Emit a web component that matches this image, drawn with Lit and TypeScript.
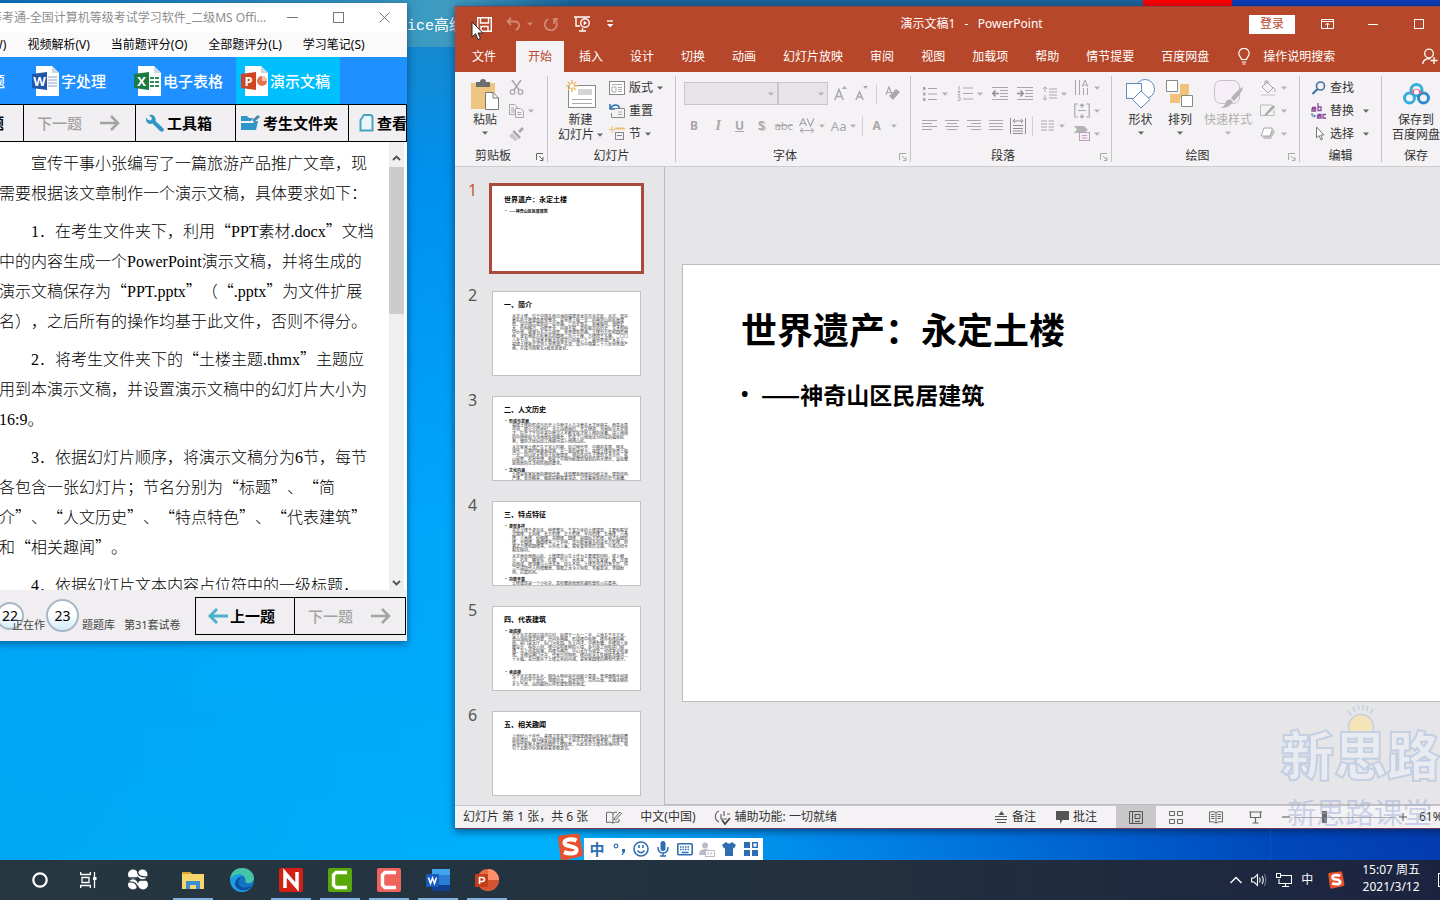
import { LitElement, html, svg, css } from "lit";
import { customElement } from "lit/decorators.js";
import { classMap } from "lit/directives/class-map.js";

const ico = (w: number, h: number, body: unknown) =>
  html`<svg class="ico" width=${w} height=${h} viewBox="0 0 ${w} ${h}" fill="none" aria-hidden="true">${body}</svg>`;

const caret = (color = "#666") => ico(6, 4, svg`<path d="M0 0.5H6L3 3.7Z" fill=${color}/>`);
const lightCaret = () => caret("#b4b2b4");

const G = "#a9a7aa";

const sogou = (s: number) => html`<svg class="ico" width=${s} height=${s} viewBox="0 0 28 28" fill="none" aria-hidden="true">
  <path d="M2 5Q2 3 4 2.600L21 0.600Q23 0.400 23.600 2.400L27 20Q27.300 23 25 23.600L8 27.400Q5 27.800 4.500 25Z" fill="#e8512d"/>
  <path d="M20.500 7.500C16 5.500 8.500 6 8.500 10C8.500 14.500 20.500 12 20.500 17C20.500 21.500 12 21 8 19" stroke="#fff" stroke-width="4.200"/></svg>`;

const docIcon = (letter: string, color: string, lines: unknown) => html`<span class="doc">
  ${ico(28, 32, svg`<path d="M4 1H20L27 8V31H4Z" fill="#fff"/><path d="M20 1V8H27Z" fill="#cfd6e0"/>${lines}<path d="M0 9L15 7V25L0 23Z" fill=${color}/>`)}
  <b class="doc-letter">${letter}</b></span>`;

const arrowRight = ico(20, 16, svg`<path d="M0 8H18M11 1L18 8L11 15" stroke="#a3a3a3" stroke-width="2.500"/>`);
const arrowLeft = ico(20, 16, svg`<path d="M20 8H2M9 1L2 8L9 15" stroke="#49b3cf" stroke-width="3"/>`);

/** Sets Latin runs in the serif face, leaving Chinese text and its full-width marks alone. */
const mixed = (line: string) =>
  line.split(/([A-Za-z0-9.:]+)/).map((part, i) => (i % 2 ? html`<span class="latin">${part}</span>` : part));

const PARAGRAPHS: string[][] = [
  ["宣传干事小张编写了一篇旅游产品推广文章，现", "需要根据该文章制作一个演示文稿，具体要求如下："],
  ["1．在考生文件夹下，利用“PPT素材.docx”文档", "中的内容生成一个PowerPoint演示文稿，并将生成的", "演示文稿保存为“PPT.pptx”（“.pptx”为文件扩展", "名），之后所有的操作均基于此文件，否则不得分。"],
  ["2．将考生文件夹下的“土楼主题.thmx”主题应", "用到本演示文稿，并设置演示文稿中的幻灯片大小为", "16:9。"],
  ["3．依据幻灯片顺序，将演示文稿分为6节，每节", "各包含一张幻灯片；节名分别为“标题”、“简", "介”、“人文历史”、“特点特色”、“代表建筑”", "和“相关趣闻”。"],
  ["4．依据幻灯片文本内容占位符中的一级标题，"],
];

@customElement("exam-window")
export class ExamWindow extends LitElement {
  static styles = css`
    :host { display: flex; flex-direction: column; background: #fff; overflow: hidden; color: #000;
      font: 12px/16px "Noto Sans", "Noto Sans CJK SC", sans-serif; box-shadow: 0 2px 8px rgba(0, 30, 70, 0.55); }
    button { font: inherit; color: inherit; background: none; border: 0; padding: 0; margin: 0; display: flex; align-items: center; }
    .ico { display: block; flex: none; }
    .title { display: flex; align-items: center; height: 29px; padding-left: 30px; color: #8d8d8d; white-space: nowrap; }
    .title h1 { font: inherit; margin: 0; flex: 1; }
    .title button { width: 46px; justify-content: center; }
    .menu { display: flex; align-items: center; gap: 21px; height: 25px; padding-left: 4px; background: #fbfafb; white-space: nowrap; }
    .tabs { display: grid; grid-template-columns: 67px 102px 107px 104px 1fr; height: 47px; background: #1e90ff; color: #fff; }
    .tabs button { font-size: 15px; font-weight: 500; line-height: 20px; gap: 1px; padding-left: 5px; white-space: nowrap; }
    .tabs .first { justify-content: flex-end; padding-right: 22px; }
    .tabs .on { background: #00bfff; }
    .doc { display: grid; }
    .doc > * { grid-area: 1 / 1; }
    .doc-letter { color: #fff; font: bold 13px/32px "Open Sans", sans-serif; width: 15px; text-align: center; }
    .tools { display: grid; grid-template-columns: 64px 112px 100px 113px 1fr; height: 38px; box-sizing: border-box;
      border-top: 1px solid #000; border-bottom: 1px solid #000; background: #f1eff1; }
    .tools button { border-right: 1px solid #000; font-size: 15px; font-weight: 600; line-height: 20px; gap: 3px; padding-left: 5px; white-space: nowrap; overflow: hidden; }
    .tools .first { justify-content: flex-end; padding-right: 19px; }
    .tools .off { color: #a3a3a3; font-weight: 500; padding: 0 15px 0 13px; justify-content: space-between; }
    .tools .wide { padding-left: 10px; }
    .body { flex: 1; min-height: 0; display: flex; }
    .text { flex: 1; min-width: 0; overflow: hidden; padding: 5px 0 0 39px; font: 300 16px/30px "Noto Sans CJK SC", sans-serif; text-spacing-trim: space-all; }
    .text p { margin: 0 0 8px; text-indent: 32px; white-space: nowrap; }
    .line { display: block; height: 30px; }
    .line + .line { text-indent: 0; }
    .latin { font-family: "Liberation Serif", serif; font-weight: 400; line-height: 16px; }
    .scroll { width: 15px; margin-right: 3px; background: #f0eef0; display: flex; flex-direction: column; align-items: center; padding: 13px 0 4px; box-sizing: border-box; }
    .thumb { width: 15px; flex: 0 0 34%; background: #cdcbcd; margin: 6px 0 auto; }
    .foot { position: relative; display: flex; align-items: center; height: 51px; background: #f0eef0; padding-left: 36px; gap: 22px; }
    .circle { justify-content: center; border: 2px solid #a9b7c6; border-radius: 50%; box-sizing: border-box; width: 28px; height: 28px; font-size: 14px;
      background: linear-gradient(#fff 45%, #d3ecf8); }
    .circle.big { width: 33px; height: 33px; }
    .doing { position: absolute; left: 52px; bottom: 8px; font-size: 11px; color: #444; white-space: nowrap; display: flex; gap: 9px; }
    .doing .cut { width: 61px; }
    .nav { display: flex; margin-left: auto; margin-right: 1px; border: 1px solid #000; height: 36px; }
    .nav button { font-size: 15px; font-weight: 700; line-height: 20px; padding: 0 19px 0 12px; gap: 2px; }
    .nav .off { color: #a3a3a3; font-weight: 500; border-left: 1px solid #000; padding: 0 14px 0 13px; gap: 18px; }
  `;

  render() {
    return html`
      <header class="title">
        <h1>等考通-全国计算机等级考试学习软件_二级MS Offi...</h1>
        <button aria-label="最小化">${ico(11, 11, svg`<path d="M0 5.5H11" stroke="#777"/>`)}</button>
        <button aria-label="最大化">${ico(11, 11, svg`<rect x=".5" y=".5" width="10" height="10" stroke="#777"/>`)}</button>
        <button aria-label="关闭">${ico(11, 11, svg`<path d="M.5 .5L10.500 10.500M10.500 .5L.5 10.500" stroke="#777"/>`)}</button>
      </header>
      <nav class="menu">
        <button>窗口(W)</button><button>视频解析(V)</button><button>当前题评分(O)</button><button>全部题评分(L)</button><button>学习笔记(S)</button>
      </nav>
      <nav class="tabs">
        <button class="first">选择题</button>
        <button>${docIcon("W", "#1e56a8", svg`<path d="M16 12H25M16 15H25M16 18H25M16 21H25" stroke="#8d9fc0"/>`)}字处理</button>
        <button>${docIcon("X", "#1b7a43", svg`<path d="M16 13H20M21 13H25M16 17H20M21 17H25M16 21H20M21 21H25" stroke="#2f8a55" stroke-width="2"/>`)}电子表格</button>
        <button class="on">${docIcon("P", "#d04423", svg`<circle cx="21" cy="16" r="5" fill="#e9704f"/><path d="M21 16V11A5 5 0 0 1 26 16Z" fill="#f7c3b3"/>`)}演示文稿</button>
      </nav>
      <div class="tools">
        <button class="first">上一题</button>
        <button class="off" disabled>下一题 ${arrowRight}</button>
        <button class="wide">${ico(18, 18, svg`<path d="M3 1L6 4L5 6.500L2 6L0 3.500C-1 8 3 11 6.500 9.500L14 17Q16 18.500 17.400 17Q18.500 15.500 17 14L9.500 7C10.500 3 7 -0.500 3 1Z" fill="#2f97c8"/>`)}工具箱</button>
        <button>${ico(19, 16, svg`<path d="M0 1H6L8 3H12L10 6H0Z" fill="#2f97c8"/><path d="M0 8H12L14 6H17L15 15H0Z" fill="#2f97c8"/><path d="M11 5L17 0L19 2L13 7Z" fill="#4a86a8"/>`)}考生文件夹</button>
        <button class="wide">${ico(15, 18, svg`<path d="M5 1H11Q13.500 1 13.500 3.500V16.500H1.500V6Z" stroke="#49a4c4" stroke-width="2" fill="#eaf6fa"/>`)}查看</button>
      </div>
      <div class="body">
        <article class="text">
          ${PARAGRAPHS.map((p) => html`<p>${p.map((l) => html`<span class="line">${mixed(l)}</span>`)}</p>`)}
        </article>
        <div class="scroll">
          ${ico(9, 6, svg`<path d="M1 5L4.500 1.500L8 5" stroke="#505050" stroke-width="1.800"/>`)}
          <div class="thumb"></div>
          ${ico(9, 6, svg`<path d="M1 1L4.500 4.500L8 1" stroke="#505050" stroke-width="1.800"/>`)}
        </div>
      </div>
      <footer class="foot">
        <button class="circle">22</button>
        <button class="circle big">23</button>
        <span class="doing"><span class="cut">正在作</span><span>题题库</span><span>第31套试卷</span></span>
        <div class="nav">
          <button>${arrowLeft}上一题</button>
          <button class="off" disabled>下一题${arrowRight}</button>
        </div>
      </footer>`;
  }
}

type Block = { head?: string; text?: string[] };
const SLIDES: { title: string; blocks: Block[] }[] = [
  { title: "世界遗产：永定土楼", blocks: [{ head: "——神奇山区民居建筑" }] },
  {
    title: "一、简介",
    blocks: [{ text: ["永定土楼，位于中国东南沿海的福建省龙岩市永定区，永定，现存著名的土楼建筑类型繁多，是世界上独一无二的神奇山区民居建筑，是中国古建筑的一朵奇葩。它历史悠久、风格独特，规模宏大、结构精巧，功能齐全、内涵丰富，具有极高的历史、艺术和科学价值，被誉为东方古城堡、世界建筑奇葩。土楼分方形和圆形两种，龙岩地区共有著名的圆楼三百六十座，方楼四千多座。二〇〇八年七月，在加拿大魁北克城举行的第三十二届世界遗产大会上，福建土楼被正式列入世界遗产名录，成为中国第三十六处世界遗产地，并成为国家五A级旅游景区。"] }],
  },
  {
    title: "二、人文历史",
    blocks: [
      { head: "形成与发展", text: [
        "福建土楼的形成与历史上中原汉人几次著名大迁徙相关。西晋永嘉年间，即公元四世纪，北方战祸频仍，天灾肆虐，当地民众大举南迁，拉开了千百年来中原汉人不断举族迁徙入闽的序幕。进入闽南的中原移民与当地居民相融合，形成了以闽南话为特征的福佬民系；辗转迁徙后经江西赣州进入闽西山区。",
        "永定客家土楼产生于宋元时期，经过明代早、中期的发展，明末、清代、民国时期逐渐成熟，并一直延续至今。福建土楼是世界上独一无二的山区大型夯土民居建筑，创造性的生土建筑艺术杰作，依山就势，布局合理，吸收了中国传统建筑规划的风水理念，适应聚族而居的生活和防御的要求。" ] },
      { head: "文化内涵", text: ["土楼是客家民居的典型代表，体现聚族而居的传统文化，建筑结构严谨，装饰精美，楹联匾额寓意深远，记录着家族的历史与荣耀，代代相传，生生不息，绵延千年。"] },
    ],
  },
  {
    title: "三、特点特征",
    blocks: [
      { head: "类型多样", text: [
        "永定土楼千姿百态，种类繁多，千变万化的土楼建筑，主要有殿堂式围楼、五凤楼、长方形楼、正方形楼、半月形楼、五角楼、六角楼、八角楼、纱帽楼、吊脚楼、圆楼、前圆后方形楼、前方后圆形楼、半圆楼、椭圆楼等三十多种，其中数量最多的是长方形楼、府第式方楼和圆楼等，从外形上看，富有变化和层次感，与青山绿水相互映衬。",
        "永定地处闽西山区，土楼建筑以生土作为主要建筑材料，掺上细沙、石灰、糯米饭、红糖、竹片、木条等，经过反复揉、舂、压建造而成。楼顶覆以火烧瓦盖，经久不损。土楼高可达四至五层，供三代或四代人同楼聚居，规模之大令人惊叹，冬暖夏凉，坚固耐用，抗震防风。" ] },
      { head: "功能丰富", text: ["土楼建筑是一个小社会，具有聚族而居防盗防兽防火抗震等。"] },
    ],
  },
  {
    title: "四、代表建筑",
    blocks: [
      { head: "振成楼", text: [
        "位于永定县湖坑镇洪坑村，始建于一九一二年，占地五千平方米，悬山顶抬梁式构架，分内外两圈，形成楼中有楼，楼外有楼的格局。前门是大厅，后门为花园。外土内洋，中西合璧，外楼按八卦图设计，每卦六间，楼中设有砖砌防火墙，卦与卦之间有拱门相通，关上自成院落。内楼为两层，中心大厅为祖堂，可供宴会和演戏。全楼设两口水井，代表日月阴阳。楼内有永久性楹联及题词二十余幅，充分展示了土楼文化的内涵，是客家圆楼的典型代表作。", "　" ] },
      { head: "承启楼", text: ["位于永定县高头乡，相传从明崇祯年间破土奠基，至清康熙年间竣工，历时半个世纪，规模巨大，造型奇特，古色古香，充满浓郁的乡土气息，由四圈同心环形建筑组合而成。"] },
    ],
  },
  {
    title: "五、相关趣闻",
    blocks: [{ text: ["上世纪八十年代，美国卫星发现中国福建西部山区有大片神秘的蘑菇状建筑，疑为核反应堆装置，于是派人前来实地考察，结果发现是世代客家人居住的圆形土楼民居，从此永定土楼名扬海内外，吸引了无数中外游客前来参观游览。"] }],
  },
];

const alignLines = (a: number[][]) => ico(16, 13, svg`${a.map(([x, w], i) => svg`<path d="M${x} ${0.5 + i * 3}h${w}" stroke=${G}/>`)}`);

@customElement("slides-window")
export class SlidesWindow extends LitElement {
  static styles = css`
    :host { display: flex; flex-direction: column; background: #e6e6e8; overflow: hidden; color: #333; box-sizing: border-box;
      border-top: 1px solid #8a4a48; border-bottom: 1px solid #6e3b52;
      font: 12px/16px "Noto Sans", "Noto Sans CJK SC", sans-serif; box-shadow: 0 2px 8px rgba(0, 20, 60, 0.6); }
    button { font: inherit; color: inherit; background: none; border: 0; padding: 0; margin: 0; display: flex; align-items: center; white-space: nowrap; }
    .ico { display: block; flex: none; }
    .bar { display: grid; grid-template-columns: 1fr auto 1fr; align-items: center; height: 34px; background: #b7472a; color: #fff; flex: none; }
    .bar h1 { font: inherit; margin: 0; white-space: pre; }
    .quick { display: flex; align-items: center; gap: 14px; padding-left: 22px; }
    .quick .dim { opacity: 0.35; }
    .quick button { gap: 6px; }
    .quick .start { margin: 0 2px 0 -6px; }
    .quick .undo { margin-right: -3px; }
    .win { display: flex; justify-content: flex-end; align-items: center; }
    .win button { width: 46px; justify-content: center; }
    .win .login { background: #fff; color: #b7472a; height: 19px; margin-right: 9px; }
    .ribbon-tabs { display: flex; height: 31px; background: #b7472a; color: #fff; padding-left: 5px; gap: 3px; flex: none; }
    .ribbon-tabs button { padding: 0 12px; }
    .ribbon-tabs .file { margin-right: 5px; }
    .ribbon-tabs .on { background: #f4f2f4; color: #b7472a; }
    .ribbon-tabs .tell { padding: 0 0 0 14px; gap: 13px; }
    .ribbon-tabs .share { margin-left: auto; padding: 0 50px 0 0; }
    .ribbon { display: grid; grid-template-columns: 93px 128px 235px 201px 188px 82px 1fr; height: 95px; box-sizing: border-box; padding: 4px 0;
      background: #f4f2f4; border-bottom: 1px solid #cfcdcf; flex: none; }
    .group { display: flex; flex-direction: column; border-right: 1px solid #c6c4c6; min-width: 0; position: relative; }
    .group:last-child { border: 0; }
    .group .in { flex: 1; display: flex; min-height: 0; }
    .group h2 { font: inherit; margin: 0; height: 14px; text-align: center; padding-right: 16px; }
    .group .mid { padding-right: 0; }
    .launch { position: absolute; right: 3px; bottom: 1px; }
    .big { flex-direction: column; padding-top: 3px; gap: 3px; }
    .big.off { color: #b0aeb0; }
    .big .art { height: 30px; display: grid; place-items: center; }
    .two { display: flex; align-items: center; gap: 3px; }
    .tight { line-height: 15px; }
    .side { display: grid; grid-template-rows: repeat(3, 23px); align-content: start; }
    .side button { gap: 4px; }
    .clip { padding-left: 15px; gap: 9px; }
    .new { padding-left: 10px; gap: 6px; }
    .rows { flex-direction: column; padding-left: 8px; }
    .row { display: flex; align-items: center; height: 30px; gap: 8px; }
    .row.first { height: 35px; }
    .row button { gap: 4px; color: #a9a7aa; }
    .row .vr { width: 1px; height: 20px; background: #d2d0d2; }
    .combo { display: grid; align-items: center; justify-items: end; }
    .combo > * { grid-area: 1 / 1; }
    .combo select { appearance: none; box-sizing: border-box; height: 23px; width: 94px; border: 1px solid #c8c6c8; background: #e6e4e6; border-radius: 0; margin: 0; opacity: 1; }
    .combo .small { width: 50px; }
    .combo .ico { margin-right: 4px; pointer-events: none; z-index: 1; }
    .combos { display: flex; margin-right: -2px; }
    .fmt { font: bold 12px/16px "Noto Sans", sans-serif; }
    .row.text { padding-left: 6px; gap: 14px; }
    .row.text .grp { display: flex; align-items: center; gap: 6px; margin-left: -4px; }
    .it { font-style: italic; font-family: "Liberation Serif", serif; font-size: 14px; }
    .un { text-decoration: underline; }
    .sh { text-shadow: 2px 1px 1px #ccc; }
    .st { text-decoration: line-through; font-weight: 400; font-size: 11px; }
    .aa { font-weight: 400; font-size: 13px; }
    .para { padding-left: 11px; justify-content: space-between; }
    .para .row { gap: 9px; }
    .para .row + .row { gap: 6px; }
    .para .side { padding-right: 11px; }
    .draw { padding-left: 13px; gap: 10px; }
    .draw .side { margin-left: -2px; }
    .draw .side button { gap: 5px; }
    .edit { padding-left: 11px; }
    .edit .side button { gap: 3px; }
    .edit .ico + span + .ico { margin-left: 6px; }
    .save { padding-left: 10px; }
    .save + h2 { text-align: left; padding-left: 22px; }
    .main { flex: 1; min-height: 0; display: grid; grid-template-columns: 210px 1fr; }
    .list { margin: 0; padding: 19px 0 0 13px; list-style: none; display: flex; flex-direction: column; gap: 20px; overflow: hidden; border-right: 1px solid #bdbbbd; }
    .item { display: grid; grid-template-columns: 24px 149px; height: 85px; color: #555; font-size: 16px; line-height: 8px; flex: none; }
    .card { background: #fff; border: 1px solid #c2c0c2; overflow: hidden; color: #333; font: 4px/4px "Noto Sans CJK SC", sans-serif; padding: 7px 11px 0; }
    .card h3 { font: bold 7px/11px "Noto Sans CJK SC", sans-serif; margin: 0 0 4px; color: #000; }
    .card ul { margin: 0 0 3px; padding: 0 0 0 8px; list-style: none; }
    .card li { overflow-wrap: anywhere; margin-bottom: 2px; }
    .card .head { font-weight: bold; color: #111; margin: 0; }
    .item.on { color: #c9563b; }
    .item.on .card { border-color: #fff; outline: 3px solid #a84b3c; }
    .stage { display: flex; align-items: center; justify-content: center; padding: 0 24px 5px 12px; border-bottom: 1px solid #bdbbbd; min-width: 0; }
    .slide { width: 100%; max-width: 777px; aspect-ratio: 16 / 9; box-sizing: border-box; background: #fff; border: 1px solid #bdbbbd; color: #000;
      font-family: "Noto Sans CJK SC", sans-serif; font-weight: bold; padding: 38px 58px; }
    .slide h2 { font-size: 36px; line-height: 50px; margin: 0 0 24px; text-spacing-trim: space-all; }
    .slide p { margin: 0; font-size: 23px; line-height: 34px; display: flex; }
    .dot { font-family: "Open Sans", sans-serif; font-size: 20px; width: 20px; }
    .status { display: flex; align-items: center; height: 23px; background: #f4f2f4; border-top: 1px solid #c6c4c6; padding-left: 8px; flex: none; white-space: nowrap; box-sizing: border-box; }
    .status .l { display: flex; gap: 18px; flex: 1; align-items: center; }
    .status button { gap: 4px; }
    .status .talk { margin: 0 19px 0 20px; }
    .status .v { width: 40px; height: 22px; justify-content: center; }
    .status .v.on { background: #c9c7c9; }
    .zoom { display: flex; align-items: center; gap: 4px; padding-left: 6px; }
    .zoom input { appearance: none; width: 101px; height: 12px; margin: 0; background: linear-gradient(#aaa, #aaa) center / 100% 1px no-repeat; }
    .zoom input::-webkit-slider-thumb { appearance: none; width: 5px; height: 12px; background: #666; border: 0; border-radius: 0; }
    .zoom .pct { padding-left: 8px; width: 77px; box-sizing: border-box; }
  `;

  private launcher(dark = false) {
    return html`<button class="launch" aria-label="更多选项">${ico(8, 8, svg`<path d="M.5 7V.5H7M3 3L7 7M7 4V7.500H4" stroke=${dark ? "#666" : "#aaa"}/>`)}</button>`;
  }

  private slides() {
    return html`<ol class="list">${SLIDES.map((s, i) => html`<li class=${classMap({ item: true, on: i === 0 })}>
      <span>${i + 1}</span>
      <div class="card"><h3>${s.title}</h3>
        ${s.blocks.map((b) => html`${b.head ? html`<p class="head">• ${b.head}</p>` : ""}<ul>${(b.text ?? []).map((t) => html`<li>${t}</li>`)}</ul>`)}
      </div></li>`)}</ol>`;
  }

  render() {
    const tabs = ["插入", "设计", "切换", "动画", "幻灯片放映", "审阅", "视图", "加载项", "帮助", "情节提要", "百度网盘"];
    return html`
      <header class="bar">
        <div class="quick">
          <button aria-label="保存">${ico(15, 15, svg`<path d="M.7 .7H14.300V14.300H2.500L.7 12.500Z" stroke="#fff" stroke-width="1.400"/><path d="M3.500 1V6H11.500V1M4 14V9.500H11V14" stroke="#fff" stroke-width="1.400"/>`)}</button>
          <button class="dim undo" aria-label="撤消">${ico(15, 14, svg`<path d="M5 1L1.500 4.500L5 8M2 4.500H9Q13.500 5 13 9Q12.500 12 9.500 13" stroke="#fff" stroke-width="1.800"/>`)}${caret("#fff")}</button>
          <button class="dim" aria-label="恢复">${ico(22, 14, svg`<path d="M4 2A6 6 0 1 0 10.500 2.500M10 7V2H14" stroke="#fff" stroke-width="1.800"/>`)}</button>
          <button class="start" aria-label="从头开始">${ico(17, 16, svg`<path d="M0 1H16M2 1V10H6M5 15H12M8.500 12V15" stroke="#fff" stroke-width="1.400"/><circle cx="11" cy="7" r="4.300" stroke="#fff" stroke-width="1.400"/><path d="M9.700 4.800L13 7L9.700 9.200Z" fill="#fff"/>`)}</button>
          <button aria-label="自定义">${ico(7, 8, svg`<path d="M0 1H6" stroke="#fff" stroke-width="1.300"/><path d="M0 4H6.500L3.200 7.300Z" fill="#fff"/>`)}</button>
        </div>
        <h1>演示文稿1   -   PowerPoint</h1>
        <div class="win">
          <button class="login">登录</button>
          <button aria-label="功能区显示选项">${ico(13, 10, svg`<path d="M.5 .5H12.500V9.500H.5ZM.5 2.500H12.500M6.500 9V4.500M4.500 6L6.500 4L8.500 6" stroke="#fff"/>`)}</button>
          <button aria-label="最小化">${ico(10, 10, svg`<path d="M0 5.500H10" stroke="#fff"/>`)}</button>
          <button aria-label="最大化">${ico(10, 10, svg`<rect x=".5" y=".5" width="9" height="9" stroke="#fff"/>`)}</button>
          <button aria-label="关闭">${ico(10, 10, svg`<path d="M0 0L10 10M10 0L0 10" stroke="#fff"/>`)}</button>
        </div>
      </header>
      <nav class="ribbon-tabs">
        <button class="file">文件</button><button class="on">开始</button>
        ${tabs.map((t) => html`<button>${t}</button>`)}
        <button class="tell">${ico(12, 17, svg`<path d="M3.500 11.500C3.500 9.500 .8 8.500 .8 5.500A5.200 5.200 0 0 1 11.200 5.500C11.200 8.500 8.500 9.500 8.500 11.500ZM3.800 14H8.200M4.500 16H7.500" stroke="#fff" stroke-width="1.200"/>`)}操作说明搜索</button>
        <button class="share" aria-label="共享">${ico(16, 17, svg`<circle cx="7" cy="5.500" r="4.300" stroke="#fff" stroke-width="1.300"/><path d="M.7 16C1 12 4 10.500 8.500 10.500M12 9V16M8.500 12.500H15.500" stroke="#fff" stroke-width="1.300"/>`)}</button>
      </nav>
      <section class="ribbon">
        <div class="group">
          <div class="in clip">
            <button class="big"><span class="art">${ico(30, 31, svg`<rect x="1" y="4" width="24" height="26" fill="#efc582"/><path d="M6 3H10Q10 0 13 0Q16 0 16 3H20V8H6Z" fill="#6d6d6d"/><path d="M15.500 13.500H23L28.500 19V30.500H15.500Z" fill="#fff" stroke="#777"/><path d="M23 13.500V19H28.500" stroke="#777"/>`)}</span><span>粘贴</span>${caret()}</button>
            <div class="side">
              <button aria-label="剪切">${ico(15, 15, svg`<path d="M3 0L10 10M12 0L5 10" stroke=${G} stroke-width="1.600"/><circle cx="3.500" cy="12" r="2.300" stroke=${G} stroke-width="1.300"/><circle cx="11.500" cy="12" r="2.300" stroke=${G} stroke-width="1.300"/>`)}</button>
              <button aria-label="复制">${ico(15, 14, svg`<path d="M.5 .5H5.500L8 3V10.500H.5ZM2 4H5M2 6H6M2 8H6" stroke=${G}/><path d="M6.500 4.500H11.500L14.500 7V13.500H6.500Z" fill="#f4f2f4" stroke=${G}/><path d="M8.500 8.500H12.500M8.500 10.500H12.500" stroke=${G}/>`)}${lightCaret()}</button>
              <button aria-label="格式刷">${ico(15, 14, svg`<path d="M9 4L13 0L15 2L11 6Z" fill=${G}/><path d="M5 3L12 10L10 12L3.500 5Z" fill=${G}/><path d="M3 6L9 12L6 14L0 9Z" fill="#c9c7c9"/>`)}</button>
            </div>
          </div>
          <h2>剪贴板</h2>${this.launcher(true)}
        </div>
        <div class="group">
          <div class="in new">
            <button class="big"><span class="art">${ico(30, 28, svg`<rect x="2.500" y="5.500" width="27" height="22" fill="#fff" stroke="#888"/><path d="M12 9H26V15H12Z" fill="#d4d4d6"/><path d="M6 19.500H26M6 23.500H26" stroke="#aaa"/><path d="M6 0V12M0 6H12M2 2L10 10M10 2L2 10" stroke="#eebd70" stroke-width="1.600"/><circle cx="6" cy="6" r="2" fill="#fff"/>`)}</span><span class="tight">新建<br /><span class="two">幻灯片 ${caret()}</span></span></button>
            <div class="side">
              <button>${ico(16, 14, svg`<rect x=".5" y=".5" width="15" height="13" stroke="#888" fill="#fff"/><path d="M3 3.500H13M3 6H7V11H3ZM9 6.500H13M9 8.500H13M9 10.500H13" stroke="#aaa"/>`)}<span>版式</span>${caret()}</button>
              <button>${ico(16, 14, svg`<path d="M4 4.500H15.500V13.500H2.500V9" stroke="#888"/><path d="M9 8H13M9 10.500H13" stroke="#aaa"/><path d="M1 0V5H6M1.500 4.500C4 0 9 0 10.500 4" stroke="#3575b5" stroke-width="1.600"/>`)}<span>重置</span></button>
              <button>${ico(16, 15, svg`<path d="M6 2.500H16" stroke="#eebd70" stroke-width="2"/><path d="M3 0V7M0 3.500H6" stroke="#eebd70"/><rect x="6.500" y="6.500" width="8" height="7" stroke="#888"/><path d="M8 9.500H13" stroke="#888"/>`)}<span>节</span>${caret()}</button>
            </div>
          </div>
          <h2 class="mid">幻灯片</h2>
        </div>
        <div class="group">
          <div class="in rows">
            <div class="row first">
              <div class="combos">
                <label class="combo"><select aria-label="字体" disabled></select>${lightCaret()}</label>
                <label class="combo"><select class="small" aria-label="字号" disabled></select>${lightCaret()}</label>
              </div>
              <button class="fmt" aria-label="增大字号">${ico(13, 15, svg`<path d="M.8 14L5 3.500L9.200 14M2.300 10.500H7.700" stroke=${G} stroke-width="1.500"/><path d="M8 3L10.500 0L13 3Z" fill=${G}/>`)}</button>
              <button class="fmt" aria-label="减小字号">${ico(13, 15, svg`<path d="M.8 14L4.500 6L8.200 14M2.300 11H6.700" stroke=${G} stroke-width="1.400"/><path d="M8 0H13L10.500 3Z" fill=${G}/>`)}</button>
              <span class="vr"></span>
              <button aria-label="清除格式">${ico(16, 15, svg`<path d="M.8 9L4 1L7.200 9M2 6.500H6" stroke=${G} stroke-width="1.200"/><path d="M4 10L11 3L15 6L8 14Z" fill=${G}/>`)}</button>
            </div>
            <div class="row text">
              <button class="fmt">B</button><button class="fmt it">&nbsp;I</button><button class="fmt un">U</button><button class="fmt sh">S</button>
              <div class="grp"><button class="fmt st">abc</button>
              <button aria-label="字符间距">${ico(16, 16, svg`<path d="M.5 8L4 .5L7.500 8M2 5.500H6M8 .5L11.500 8L15 .5" stroke=${G} stroke-width="1.200"/><path d="M1 12.500H15M4 10L1 12.500L4 15M12 10L15 12.500L12 15" stroke=${G}/>`)}${lightCaret()}</button>
              <button class="fmt aa">Aa ${lightCaret()}</button>
              <span class="vr"></span><button class="fmt">&nbsp;A &nbsp;${lightCaret()}</button></div>
            </div>
          </div>
          <h2>字体</h2>${this.launcher()}
        </div>
        <div class="group">
          <div class="in para">
            <div>
              <div class="row first">
                <button aria-label="项目符号">${ico(16, 14, svg`<path d="M6 1.500H15M6 7H15M6 12.500H15" stroke=${G}/><path d="M1 0H3.500V3H1ZM1 5.500H3.500V8.500H1ZM1 11H3.500V14H1Z" fill=${G}/>`)}${lightCaret()}</button>
                <button aria-label="编号">${ico(16, 15, svg`<path d="M6 2H16M6 7.500H16M6 13H16M2 0V4M.5 5.500H3L1 9H3.500M.5 11H3V14.500H.5" stroke=${G}/>`)}${lightCaret()}</button>
                <button aria-label="减少缩进">${ico(16, 13, svg`<path d="M0 .5H16M8 3.500H16M8 6.500H16M8 9.500H16M0 12.500H16" stroke=${G}/><path d="M7 6.500H1M3.500 3.500L.8 6.500L3.500 9.500" stroke="#8f8d90" stroke-width="1.500"/>`)}</button>
                <button aria-label="增加缩进">${ico(16, 13, svg`<path d="M0 .5H16M8 3.500H16M8 6.500H16M8 9.500H16M0 12.500H16" stroke=${G}/><path d="M0 6.500H6M3.500 3.500L6.200 6.500L3.500 9.500" stroke="#8f8d90" stroke-width="1.500"/>`)}</button>
                <button aria-label="行距">${ico(15, 15, svg`<path d="M7 3H15M7 6H15M7 9H15M7 12H15M3 1V6M3 9V14M.8 3L3 .8L5.200 3M.8 12L3 14.200L5.200 12" stroke=${G}/>`)}${lightCaret()}</button>
              </div>
              <div class="row">
                <button aria-label="左对齐">${alignLines([[0, 15], [0, 10], [0, 15], [0, 10]])}</button>
                <button aria-label="居中">${alignLines([[1, 14], [3, 10], [1, 14], [3, 10]])}</button>
                <button aria-label="右对齐">${alignLines([[1, 14], [5, 10], [1, 14], [5, 10]])}</button>
                <button aria-label="两端对齐">${alignLines([[1, 14], [1, 14], [1, 14], [1, 14]])}</button>
                <button aria-label="分散对齐">${ico(16, 16, svg`<path d="M.5 0V16M15.500 0V16M3 3H13M5 1L3 3L5 5M11 1L13 3L11 5M3 7.500H13M3 10.500H13M3 13H13M3 15.500H13" stroke="#8f8d90"/>`)}</button>
                <span class="vr"></span>
                <button aria-label="分栏">${ico(16, 12, svg`<path d="M2 1H8M9.500 1H15M2 4H8M9.500 4H15M2 7H8M9.500 7H15M2 10H8M9.500 10H15" stroke=${G}/>`)}${lightCaret()}</button>
              </div>
            </div>
            <div class="side">
              <button aria-label="文字方向">${ico(16, 16, svg`<path d="M1.500 0V15M5.500 0V15M9.500 8V15M13.500 8V15M8 7L11 0L14 7M9 5H13" stroke=${G}/>`)}${lightCaret()}</button>
              <button aria-label="对齐文本">${ico(16, 16, svg`<path d="M4 1H.8V14H4M12 1H15.200V14H12M8 1V5M8 11V15M6 3L8 1L10 3M6 13L8 15L10 13M4 7.500H12" stroke=${G} stroke-width="1.200"/>`)}${lightCaret()}</button>
              <button aria-label="转换为 SmartArt">${ico(16, 15, svg`<path d="M0 0H10L14 4L10 7H0L3 3.500Z" fill="#b4b2b4"/><rect x="5.500" y="6.500" width="10" height="8" fill="#f7eef8" stroke="#b9a0bd"/><path d="M8 9.500H13M8 12H13" stroke="#b9a0bd"/>`)}${lightCaret()}</button>
            </div>
          </div>
          <h2>段落</h2>${this.launcher()}
        </div>
        <div class="group">
          <div class="in draw">
            <button class="big"><span class="art">${ico(31, 30, svg`<circle cx="20" cy="10" r="9.500" fill="#fff" stroke="#5f8cc0"/><rect x="1.500" y="4.500" width="15" height="15" fill="#fff" stroke="#5f8cc0"/><path d="M16 12L25 20.500L16 29L7.500 20.500Z" fill="#fff" stroke="#5f8cc0"/>`)}</span><span>形状</span>${caret()}</button>
            <button class="big"><span class="art">${ico(28, 28, svg`<path d="M14 4H23V14H14ZM4 14H14V23H4Z" fill="#f0c27a"/><path d="M16 10H22V18H12V16Z" fill="#f0c27a"/><path d="M.5 .5H11.500V11.500H.5ZM15.500 15.500H26.500V26.500H15.500Z" fill="#fff" stroke="#888"/>`)}</span><span>排列</span>${caret()}</button>
            <button class="big off"><span class="art">${ico(31, 30, svg`<rect x="1.500" y="1.500" width="25" height="23" rx="6" fill="#f5eef6" stroke="#cbbfcd"/><path d="M30 8Q25 10 18 19L21 22Q29 14 30 8Z" fill="#b4b2b4"/><path d="M17 20L20 23Q16 29 8 29Q13 26 13 22Z" fill="#b4b2b4"/>`)}</span><span>快速样式</span>${lightCaret()}</button>
            <div class="side">
              <button aria-label="形状填充">${ico(16, 16, svg`<path d="M2 7L7 2L13 8L8 13Z" stroke=${G}/><path d="M5 5V1H8V4M13 7Q16 9 15 12" stroke=${G}/><path d="M1 14H15V16H1Z" fill="#e2d6e4"/>`)}${lightCaret()}</button>
              <button aria-label="形状轮廓">${ico(16, 14, svg`<path d="M12 1H.5V11.500H14V6" stroke="#bbb"/><path d="M5 10L13 1L15 3L7 11L4 12Z" fill=${G}/>`)}${lightCaret()}</button>
              <button aria-label="形状效果">${ico(16, 14, svg`<path d="M5 2H13L15 5L11 12H3Z" fill="#c4c2c4"/><path d="M4 1H11Q13 1 12 3L10 9H1Z" fill="#fff" stroke=${G}/>`)}${lightCaret()}</button>
            </div>
          </div>
          <h2>绘图</h2>${this.launcher()}
        </div>
        <div class="group">
          <div class="in edit">
            <div class="side">
              <button>${ico(16, 14, svg`<circle cx="9.500" cy="5" r="4" stroke="#4471a8" stroke-width="1.600"/><path d="M6.500 8L1.500 13" stroke="#4471a8" stroke-width="2.200"/>`)}<span>查找</span></button>
              <button>${ico(16, 16, svg`<path d="M1 4.500H4.500V8H1V6H4.500M7 0V7.500H10V4H7M6.500 11.500H10V15H6.500V13H10M15 11.500H12V15H15" stroke="#8a4a9c" stroke-width="1.300"/><path d="M1 10V13H4M3 11.500L4.500 13L3 14.500" stroke="#4471a8"/>`)}<span>替换</span>${caret()}</button>
              <button>${ico(16, 15, svg`<path d="M5.500 1V12L8 9.500L10 14L11.500 13L9.700 9H13Z" stroke="#777" fill="#fff"/>`)}<span>选择</span>${caret()}</button>
            </div>
          </div>
          <h2 class="mid">编辑</h2>
        </div>
        <div class="group">
          <div class="in save">
            <button class="big"><span class="art">${ico(27, 22, svg`<circle cx="13.500" cy="7" r="5.500" stroke="#35aedc" stroke-width="3"/><circle cx="6.500" cy="15" r="5" stroke="#35aedc" stroke-width="3"/><circle cx="20.500" cy="15" r="5" stroke="#2f8ad0" stroke-width="3"/><path d="M9 10.500Q13.500 4 18 10.500" stroke="#ea5f84" stroke-width="3"/><circle cx="13.500" cy="9" r="2.500" fill="#fff"/>`)}</span><span class="tight">保存到<br />百度网盘</span></button>
          </div>
          <h2>保存</h2>
        </div>
      </section>
      <main class="main">
        ${this.slides()}
        <div class="stage">
          <article class="slide">
            <h2>世界遗产：永定土楼</h2>
            <p><span class="dot">•</span>——神奇山区民居建筑</p>
          </article>
        </div>
      </main>
      <footer class="status">
        <div class="l">
          <span>幻灯片 第 1 张，共 6 张</span>
          <button aria-label="拼写检查">${ico(16, 13, svg`<path d="M7 2V12M7 2Q4 .5 .5 1.500V11.500Q4 10.500 7 12Q9 10.800 13 11V8M7 2Q9 .8 11 1.200M8 8L14 1L15.500 2.500L9.500 9Z" stroke="#666"/>`)}</button>
          <span>中文(中国)</span>
          <button>${ico(17, 15, svg`<path d="M5 1A6 6 0 0 0 5 12M7 4V9H13M10 1V6M13 4H16" stroke="#666" stroke-width="1.200"/><path d="M8 10L11 14L16 8" stroke="#444" stroke-width="1.800"/>`)}辅助功能: 一切就绪</button>
        </div>
        <button>${ico(13, 12, svg`<path d="M0 5.500H12M0 8.500H12M2 11.500H11" stroke="#555"/><path d="M3.500 4L6.500 0L9.500 4Z" fill="#555"/>`)}备注</button>
        <button class="talk">${ico(13, 13, svg`<path d="M0 0H13V9H6.500L4 13V9H0Z" fill="#555"/>`)}批注</button>
        <button class="v on" aria-label="普通视图">${ico(14, 13, svg`<path d="M.5 .5H13.500V12.500H.5ZM3.500 .5V12.500M6 3.500H11V7.500H6ZM6 10.500H11" stroke="#555"/>`)}</button>
        <button class="v" aria-label="幻灯片浏览">${ico(14, 13, svg`<path d="M.5 .5H5.500V4.500H.5ZM8.500 .5H13.500V4.500H8.500ZM.5 8.500H5.500V12.500H.5ZM8.500 8.500H13.500V12.500H8.500Z" stroke="#666"/>`)}</button>
        <button class="v" aria-label="阅读视图">${ico(14, 13, svg`<path d="M7 1V12M7 1.500Q4 0 .5 1V11Q4 10 7 12Q10 10 13.500 11V1Q10 0 7 1.500M2 3.500H5.500M2 5.500H5.500M2 7.500H5.500M8.500 3.500H12M8.500 5.500H12M8.500 7.500H12" stroke="#666"/>`)}</button>
        <button class="v" aria-label="幻灯片放映">${ico(14, 13, svg`<path d="M0 1H13M1.500 1V6.500H11.500V1M6.500 7V11.500M3.500 12H9.500" stroke="#666" stroke-width="1.200"/>`)}</button>
        <div class="zoom">
          <button aria-label="缩小">${ico(8, 8, svg`<path d="M0 4H8" stroke="#555"/>`)}</button>
          <input type="range" aria-label="缩放" min="0" max="100" value="29" />
          <button aria-label="放大">${ico(8, 8, svg`<path d="M0 4H8M4 0V8" stroke="#555"/>`)}</button>
          <span class="pct">61%</span>
        </div>
      </footer>`;
  }
}

@customElement("app-root")
export class AppRoot extends LitElement {
  static styles = css`
    :host { display: flex; flex-direction: column; height: 100vh; overflow: hidden; position: relative; color: #fff;
      font: 12px/16px "Noto Sans", "Noto Sans CJK SC", sans-serif; }
    button { font: inherit; color: inherit; background: none; border: 0; padding: 0; margin: 0; display: flex; align-items: center; }
    .ico { display: block; flex: none; }
    .desk { flex: 1; position: relative; overflow: hidden;
      background: linear-gradient(90deg, #00a8f2 0, #00b0fb 38%, #007fe4 62%, #0049bd 88%, #043cae); }
    .glow { position: absolute; inset: 0 auto 0 0; width: 460px; background: linear-gradient(#1c86c4, #0090ee 20%, #00a6fb 60%, rgba(0, 172, 248, 0)); }
    .banner { position: absolute; inset: 0 0 auto 0; height: 47px; display: flex; background: linear-gradient(90deg, #0a74c0, #3f9cc0 31%, #1a6398 40%, #1a6398); }
    .banner i { margin-left: auto; width: 89px; background: #ff0000; }
    .banner b { width: 208px; background: #0b3fb5; }
    .wall { position: absolute; left: 407px; top: 18px; font: 15px/18px "Liberation Mono", "Noto Sans CJK SC", monospace; white-space: nowrap; }
    .exam { position: absolute; left: -40px; top: 3px; width: 447px; height: 638px; }
    .slides { position: absolute; left: 455px; right: -48px; top: 6px; bottom: 31px; }
    .ime { position: absolute; left: 556px; bottom: 0; display: flex; align-items: flex-end; }
    .ime .strip { display: flex; align-items: center; gap: 6px; height: 22px; background: #fff; color: #2f6db3; padding: 0 4px 0 5px; }
    .ime .strip button { justify-content: center; width: 16px; font-weight: 700; font-size: 15px; }
    .ime .logo { margin-bottom: -1px; }
    .mark { position: absolute; right: 0; bottom: -3px; width: 170px; height: 160px; pointer-events: none; display: flex; flex-direction: column; box-sizing: border-box;
      padding-left: 10px; white-space: nowrap; z-index: 2; border: 1px solid rgba(255, 255, 255, 0.06); border-width: 0 0 1px 1px; }
    .mark .sun { align-self: center; margin-bottom: -12px; }
    .mark .art { font: 900 53px/60px "Noto Sans CJK SC", sans-serif; color: #e9ebf1; -webkit-text-stroke: 2px #c3cfe2; }
    .mark .sub { font: 400 29px/36px "Noto Sans CJK SC", sans-serif; color: rgba(160, 175, 215, 0.5); padding-left: 6px; margin-top: 10px; }
    .cursor { position: absolute; left: 471px; top: 21px; z-index: 3; }
    .bar { height: 40px; flex: none; display: flex; background: linear-gradient(90deg, #263741, #22303f 60%, #1c2340); }
    .apps { display: flex; flex: 1; padding-left: 15px; }
    .apps button { width: 49px; justify-content: center; }
    .apps .files { margin-left: 6px; }
    .apps .open { background: linear-gradient(#7db1e2, #7db1e2) center bottom / 40px 2px no-repeat; }
    .tray { display: flex; align-items: center; gap: 9px; }
    .tray .s { margin: 0 6px 0 5px; }
    .clock { line-height: 17px; text-align: center; padding: 0 9px 4px 2px; }
    .edge { width: 2px; height: 14px; border: 1px solid #fff; border-right: 0; box-sizing: border-box; }
  `;

  render() {
    const camtasia = (c: string) => ico(24, 24, svg`<rect width="24" height="24" rx="2" fill=${c}/><path d="M19 4.500H8L5.500 7V17L8 19.500H19" stroke="#fff" stroke-width="3.400"/>`);
    return html`
      <div class="desk">
        <div class="glow"></div>
        <div class="banner"><i></i><b></b></div>
        <span class="wall">ice高级</span>
        <exam-window class="exam"></exam-window>
        <slides-window class="slides"></slides-window>
        <div class="ime">
          <span class="logo">${sogou(28)}</span>
          <div class="strip">
            <button>中</button>
            <button aria-label="标点">${ico(12, 12, svg`<circle cx="3" cy="3" r="1.800" stroke="#2f6db3" stroke-width="1.200"/><path d="M9 6H12V9L9.500 12H8.500L10 9H9Z" fill="#2f6db3"/>`)}</button>
            <button aria-label="表情">${ico(16, 16, svg`<circle cx="8" cy="8" r="7" stroke="#2f6db3" stroke-width="1.600"/><path d="M6 4V7M10 4V7" stroke="#2f6db3" stroke-width="1.600"/><path d="M4.500 9.500Q8 14 11.500 9.500" stroke="#2f6db3" stroke-width="1.400"/>`)}</button>
            <button aria-label="语音">${ico(12, 16, svg`<rect x="3.500" y="0" width="5" height="10" rx="2.500" fill="#2f6db3"/><path d="M1 6Q1 12 6 12Q11 12 11 6M6 12V15M3 15H9" stroke="#2f6db3" stroke-width="1.500"/>`)}</button>
            <button aria-label="键盘">${ico(16, 13, svg`<rect x=".8" y=".8" width="14.400" height="11" rx="1" stroke="#2f6db3" stroke-width="1.600"/><path d="M3 4H13M3 6.500H13" stroke="#2f6db3" stroke-width="1.500" stroke-dasharray="1.500 1"/><path d="M4.500 9.500H11.500" stroke="#2f6db3" stroke-width="1.500"/>`)}</button>
            <button aria-label="用户">${ico(16, 15, svg`<circle cx="6" cy="3.500" r="3" fill="#b9bccb"/><path d="M0 13Q0 7 6 7Q9 7 10 8V13Z" fill="#b9bccb"/><rect x="6.500" y="8.500" width="9" height="6" fill="#fff" stroke="#b9bccb"/><path d="M9 10V13M12 10V13" stroke="#b9bccb"/>`)}</button>
            <button aria-label="皮肤">${ico(14, 14, svg`<path d="M4 0Q7 3 10 0L14 3L12 6.500L11 6V14H3V6L2 6.500L0 3Z" fill="#2f6db3"/>`)}</button>
            <button aria-label="工具箱">${ico(14, 14, svg`<path d="M0 0H6V6H0ZM0 8H6V14H0ZM8 8H14V14H8Z" fill="#2f6db3"/><rect x="8.700" y=".7" width="4.600" height="4.600" stroke="#2f6db3" stroke-width="1.400"/>`)}</button>
          </div>
        </div>
        <div class="mark">
          <span class="sun">${ico(32, 32, svg`<circle cx="16" cy="24" r="12.500" fill="#f5e4b8" stroke="#c3cfe2" stroke-width="1.500"/><path d="M3 8L6 12M8 4L10 9M13 2L14 7M18 2V7M23 3L21.500 8M28 6L25 11" stroke="#c3cfe2" stroke-width="1.500"/>`)}</span>
          <span class="art">新思路</span>
          <span class="sub">新思路课堂</span>
        </div>
        <div class="cursor">${ico(13, 20, svg`<path d="M1 1V16L4.500 12.800L7 18.500L9.500 17.400L7 12H11.800Z" fill="#fff" stroke="#222"/>`)}</div>
      </div>
      <footer class="bar">
        <nav class="apps">
          <button aria-label="Cortana">${ico(18, 18, svg`<circle cx="9" cy="9" r="6.700" stroke="#fff" stroke-width="2.200"/>`)}</button>
          <button aria-label="任务视图">${ico(17, 16, svg`<path d="M.7 0V2.500H10.300V0M.7 16V13.500H10.300V16M2 5.500H9V10.500H2ZM14.500 0V16" stroke="#fff" stroke-width="1.300"/><path d="M13 5H16.500V8H13Z" fill="#fff"/>`)}</button>
          <button aria-label="风车">${ico(20, 22, svg`<circle cx="5" cy="5.500" r="5" fill="#fff"/><circle cx="14.500" cy="5.500" r="5" fill="#fff"/><circle cx="5" cy="15.500" r="5" fill="#fff"/><circle cx="15" cy="15.500" r="5" fill="#fff"/><path d="M10 1Q8 8 19 8M0 13Q10 12 9.500 21M10 11L19 11M1 9H9" stroke="#263741" stroke-width="1.300"/>`)}</button>
          <button class="open files" aria-label="文件资源管理器">${ico(22, 19, svg`<path d="M0 1H8L10 3H22V18H0Z" fill="#f9d66b"/><path d="M0 1H8L10 3H0Z" fill="#dca432"/><path d="M4 18V10H18V18H14V14H8V18Z" fill="#3a8fd0"/>`)}</button>
          <button aria-label="Edge">${ico(24, 24, svg`<circle cx="12" cy="12" r="12" fill="#1273c4"/><path d="M0 11C1 3 7 0 12 0C19 0 24 5 24 10C24 14 20 16 17 15C14 14 16 12 15 10C13 5 4 6 0 11Z" fill="#45c5a5"/><path d="M0 11C4 6 11 5 14 8C9 7 7 12 9 16C12 21 18 21 22 18C19 23 14 24 12 24C5 24 0 18 0 11Z" fill="#1b9de2"/><path d="M9 12C7 17 12 22 22 18C17 25 6 23 5 16C5 12 8 9 11 9Z" fill="#0d4f9e"/>`)}</button>
          <button class="open" aria-label="N">${ico(24, 24, svg`<rect width="24" height="24" rx="2" fill="#d32015"/><path d="M6 20V5L18 19V4" stroke="#fff" stroke-width="3.500"/>`)}</button>
          <button class="open" aria-label="Camtasia">${camtasia("#58a80c")}</button>
          <button class="open" aria-label="录像机">${camtasia("#f0625c")}</button>
          <button class="open" aria-label="Word">${ico(24, 22, svg`<rect x="6" width="18" height="22" rx="1" fill="#2b7cd3"/><path d="M6 0H24V6H6Z" fill="#41a5ee"/><path d="M6 16H24V22H6Z" fill="#103f91"/><rect y="5" width="13" height="13" rx="1" fill="#185abd"/><path d="M2.500 8.500L4.500 14.500L6.500 9L8.500 14.500L10.500 8.500" stroke="#fff" stroke-width="1.500"/>`)}</button>
          <button class="open" aria-label="PowerPoint">${ico(24, 22, svg`<circle cx="13" cy="11" r="11" fill="#ed6c47"/><path d="M13 0A11 11 0 0 1 24 11H13Z" fill="#ff8f6b"/><path d="M24 11A11 11 0 0 1 3 15L13 11Z" fill="#d35230"/><rect y="5" width="13" height="13" rx="1" fill="#c43e1c"/><path d="M4.500 15V8.500H7Q9.500 8.500 9.500 10.500Q9.500 12.500 7 12.500H5" stroke="#fff" stroke-width="1.600"/>`)}</button>
        </nav>
        <div class="tray">
          <button aria-label="显示隐藏的图标">${ico(12, 8, svg`<path d="M.5 7L6 1.500L11.500 7" stroke="#fff" stroke-width="1.400"/>`)}</button>
          <button aria-label="音量">${ico(16, 14, svg`<path d="M.6 5H3L6.500 1.500V12.500L3 9H.6Z" stroke="#fff" stroke-width="1.100"/><path d="M8.500 4.500Q10 7 8.500 9.500M11 3Q13.500 7 11 11" stroke="#fff" stroke-width="1.100"/><path d="M13.500 1Q16.500 7 13.500 13" stroke="#77808c"/>`)}</button>
          <button aria-label="网络">${ico(16, 14, svg`<path d="M5 2.500H15.500V10.500H3V6M6 13.500H13M9.500 11V13" stroke="#fff" stroke-width="1.100"/><rect x=".5" y=".5" width="4" height="4" stroke="#fff"/>`)}</button>
          <button>中</button>
          <button class="s" aria-label="搜狗输入法">${sogou(18)}</button>
          <div class="clock">15:07 周五<br />2021/3/12</div>
          <span class="edge"></span>
        </div>
      </footer>`;
  }
}
